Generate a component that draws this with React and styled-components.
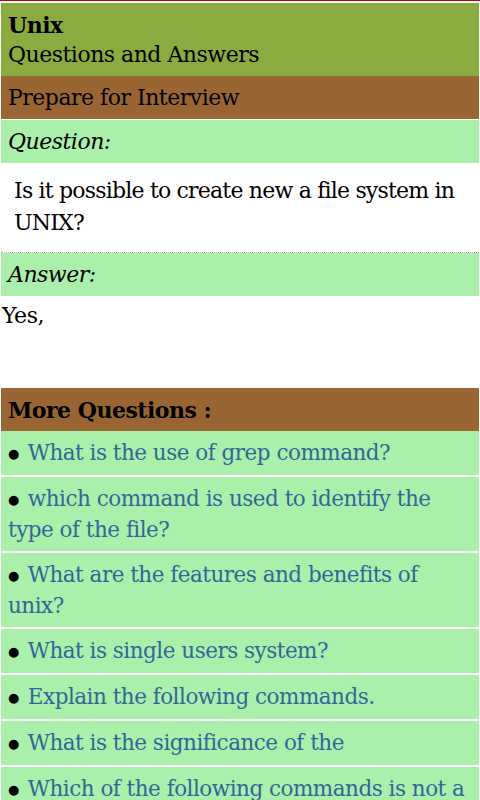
import React from "react";
import styled, { createGlobalStyle } from "styled-components";

const colors = {
  red: "#cc0000",
  olive: "#8aab3f",
  brown: "#996633",
  mint: "#aaf0aa",
  link: "#336699",
  ink: "#000000",
};

const GlobalStyle = createGlobalStyle`
  html, body {
    margin: 0;
    padding: 0;
    background: #ffffff;
  }
  body {
    font-family: "DejaVu Serif", "Liberation Serif", serif;
    color: ${colors.ink};
  }
`;

const Page = styled.div`
  width: 480px;
  border-top: 1px solid ${colors.red};
  padding: 2px 1px 0;
  box-sizing: border-box;
  display: flex;
  flex-direction: column;
`;

const Header = styled.header`
  background: ${colors.olive};
  padding: 8px 7px 7px;
  font-size: 22px;
  letter-spacing: -0.5px;
  line-height: 29px;
  & strong {
    display: block;
    font-weight: 700;
  }
`;

const Band = styled.div`
  background: ${props => (props.brown ? colors.brown : colors.mint)};
  font-size: 22px;
  letter-spacing: -0.5px;
  line-height: 30px;
  padding: 7px 7px 6px;
  font-style: ${props => (props.italic ? "italic" : "normal")};
  font-weight: ${props => (props.bold ? 700 : 400)};
  margin-bottom: ${props => (props.gap ? "1px" : "0")};
`;

const QuestionText = styled.p`
  margin: 0;
  padding: 12px 10px 13px 13px;
  font-size: 22px;
  letter-spacing: -0.8px;
  line-height: 32px;
  border-bottom: 1px dotted #aaaaaa;
`;

const AnswerText = styled.div`
  padding: 5px 1px 0;
  height: 92px;
  font-size: 22px;
  letter-spacing: -0.5px;
  line-height: 30px;
  box-sizing: border-box;
`;

const List = styled.ul`
  list-style: none;
  margin: 0;
  padding: 0;
  display: flex;
  flex-direction: column;
  gap: 2px;
`;

const Item = styled.li`
  background: ${colors.mint};
  padding: 7px 7px 6px;
  font-size: 21.5px;
  letter-spacing: -0.5px;
  line-height: 30px;
  &::before {
    content: "\u25CF";
    color: ${colors.ink};
    font-size: 13px;
    margin-right: 9px;
    vertical-align: 2px;
  }
  & a {
    color: ${colors.link};
    text-decoration: none;
  }
`;

const questions = [
  "What is the use of grep command?",
  "which command is used to identify the type of the file?",
  "What are the features and benefits of unix?",
  "What is single users system?",
  "Explain the following commands.",
  "What is the significance of the",
  "Which of the following commands is not a",
];

export default function App() {
  return (
    <>
      <GlobalStyle />
      <Page>
        <Header>
          <strong>Unix</strong>
          Questions and Answers
        </Header>
        <Band brown gap>Prepare for Interview</Band>
        <Band italic>Question:</Band>
        <QuestionText>Is it possible to create new a file system in UNIX?</QuestionText>
        <Band italic>Answer:</Band>
        <AnswerText>Yes,</AnswerText>
        <Band brown bold>More Questions :</Band>
        <List>
          {questions.map(q => (
            <Item key={q}>
              <a href="#">{q}</a>
            </Item>
          ))}
        </List>
      </Page>
    </>
  );
}
